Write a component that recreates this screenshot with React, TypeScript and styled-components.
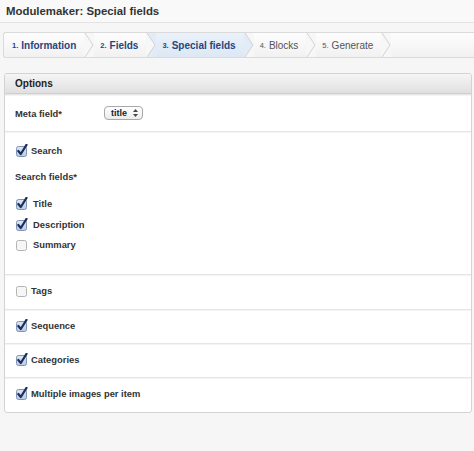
import React from "react";
import styled, { createGlobalStyle } from "styled-components";

const GlobalStyle = createGlobalStyle`
  html, body {
    margin: 0;
    padding: 0;
    background: #f6f6f6;
    font-family: "Liberation Sans", Arial, sans-serif;
    color: #333;
  }
`;

const Page = styled.div`
  width: 474px;
  height: 451px;
  overflow: hidden;
  background: #f6f6f6;
`;

const TitleBar = styled.div`
  height: 23px;
  border-bottom: 1px solid #e3e3e3;
  background: #f9f9f9;
  display: flex;
  align-items: center;
  padding-left: 6px;
  box-sizing: border-box;
`;

const PageTitle = styled.h1`
  margin: 0;
  font-size: 11.4px;
  font-weight: bold;
  color: #333;
`;

const Steps = styled.div`
  margin: 9px 0 0 3px;
  height: 26px;
  display: flex;
  align-items: stretch;
  border: 1px solid #dadada;
  border-right: none;
  border-radius: 3px 0 0 3px;
  background: linear-gradient(#fdfdfd, #f1f1f1);
  box-sizing: border-box;
  width: 480px;
`;

const Step = styled.div<{ $active?: boolean; $done?: boolean; $first?: boolean }>`
  display: flex;
  align-items: center;
  padding: 0 8px 0 ${(p) => (p.$first ? 8 : 6)}px;
  background: ${(p) => (p.$active ? "linear-gradient(#e9f1fa, #dde8f4)" : "transparent")};
  color: ${(p) => (p.$active || p.$done ? "#27457f" : "#555")};
  font-weight: ${(p) => (p.$active || p.$done ? "bold" : "normal")};
  font-size: 10px;
  white-space: nowrap;
`;

const StepNum = styled.span`
  font-size: 7.5px;
  margin-right: 3px;
`;

const Chevron = ({ left, right }: { left: string; right: string }) => (
  <svg width="10" height="24" viewBox="0 0 10 24" style={{ display: "block", flex: "none" }}>
    <rect x="0" y="0" width="10" height="24" fill={right} />
    <polygon points="0,0 1,0 9,12 1,24 0,24" fill={left} />
    <polyline points="1,0 9,12 1,24" fill="none" stroke="#d2d2d2" strokeWidth="1" />
  </svg>
);

const Panel = styled.div`
  margin: 15px 2px 0 4px;
  border: 1px solid #d3d3d3;
  border-radius: 3px;
  background: #fff;
  overflow: hidden;
`;

const PanelHeader = styled.div`
  height: 19px;
  display: flex;
  align-items: center;
  padding-left: 10px;
  background: linear-gradient(#f5f5f5, #e0e0e0);
  border-bottom: 1px solid #cfcfcf;
  font-size: 10px;
  font-weight: bold;
  color: #222;
`;

const Section = styled.div<{ $pt: number; $pb: number }>`
  padding: ${(p) => p.$pt}px 10px ${(p) => p.$pb}px 10px;
  border-top: 1px solid #e6e6e6;
  box-shadow: inset 0 1px 0 #f4f4f4;
  &:first-of-type {
    border-top: none;
    box-shadow: none;
  }
`;

const Row = styled.div<{ $gap?: number; $mt?: number }>`
  display: flex;
  align-items: center;
  height: 14px;
  gap: ${(p) => p.$gap ?? 3}px;
  margin-top: ${(p) => p.$mt ?? 0}px;
  font-size: 9.4px;
  font-weight: bold;
  color: #333;
`;

const Label = styled.span<{ $width: number }>`
  width: ${(p) => p.$width}px;
`;

const SelectBox = styled.div`
  width: 39px;
  height: 14px;
  box-sizing: border-box;
  border: 1px solid #a9a9a9;
  border-radius: 4px;
  background: linear-gradient(#ffffff, #ececec);
  display: flex;
  align-items: center;
  justify-content: space-between;
  padding: 0 4px 0 6px;
  font-size: 9px;
  font-weight: bold;
  color: #222;
`;

const Arrows = () => (
  <svg width="5" height="8" viewBox="0 0 5 8">
    <polygon points="2.5,0 5,3 0,3" fill="#444" />
    <polygon points="0,5 5,5 2.5,8" fill="#444" />
  </svg>
);

const Check = ({ checked }: { checked?: boolean }) =>
  checked ? (
    <svg width="12" height="13" viewBox="0 0 12 13" style={{ flex: "none", marginLeft: 1 }}>
      <defs>
        <linearGradient id="cb" x1="0" y1="0" x2="0" y2="1">
          <stop offset="0" stopColor="#dfe8f4" />
          <stop offset="1" stopColor="#b8cbe4" />
        </linearGradient>
      </defs>
      <rect x="0.5" y="2.5" width="10" height="10" rx="2" fill="url(#cb)" stroke="#7f93b5" />
      <polyline
        points="2.3,7 4.8,10 10.5,0.8"
        fill="none"
        stroke="#1c2f5c"
        strokeWidth="2.2"
        strokeLinecap="round"
        strokeLinejoin="round"
      />
    </svg>
  ) : (
    <svg width="12" height="13" viewBox="0 0 12 13" style={{ flex: "none", marginLeft: 1 }}>
      <rect x="0.5" y="2.5" width="10" height="10" rx="2" fill="#f6f6f6" stroke="#b3b3b3" />
    </svg>
  );

const steps = [
  { n: "1.", t: "Information", done: true },
  { n: "2.", t: "Fields", done: true },
  { n: "3.", t: "Special fields", active: true },
  { n: "4.", t: "Blocks" },
  { n: "5.", t: "Generate" },
];

const bar = "#f7f7f7";
const activeBg = "#e3ecf6";

export default function App() {
  return (
    <Page>
      <GlobalStyle />
      <TitleBar>
        <PageTitle>Modulemaker: Special fields</PageTitle>
      </TitleBar>
      <Steps>
        {steps.map((s, i) => (
          <React.Fragment key={s.t}>
            <Step $first={i === 0} $active={s.active} $done={s.done}>
              <StepNum>{s.n}</StepNum>
              {s.t}
            </Step>
            <Chevron
              left={s.active ? activeBg : bar}
              right={steps[i + 1]?.active ? activeBg : bar}
            />
          </React.Fragment>
        ))}
      </Steps>
      <Panel>
        <PanelHeader>Options</PanelHeader>
        <Section $pt={11} $pb={11}>
          <Row $gap={0}>
            <Label $width={89}>Meta field*</Label>
            <SelectBox>
              title
              <Arrows />
            </SelectBox>
          </Row>
        </Section>
        <Section $pt={11} $pb={23}>
          <Row>
            <Check checked />
            Search
          </Row>
          <Row $mt={12}>Search fields*</Row>
          <Row $mt={13} $gap={5}>
            <Check checked />
            Title
          </Row>
          <Row $mt={7} $gap={5}>
            <Check checked />
            Description
          </Row>
          <Row $mt={6} $gap={5}>
            <Check />
            Summary
          </Row>
        </Section>
        <Section $pt={8} $pb={12}>
          <Row>
            <Check />
            Tags
          </Row>
        </Section>
        <Section $pt={8} $pb={11}>
          <Row>
            <Check checked />
            Sequence
          </Row>
        </Section>
        <Section $pt={8} $pb={11}>
          <Row>
            <Check checked />
            Categories
          </Row>
        </Section>
        <Section $pt={8} $pb={12}>
          <Row>
            <Check checked />
            Multiple images per item
          </Row>
        </Section>
      </Panel>
    </Page>
  );
}
